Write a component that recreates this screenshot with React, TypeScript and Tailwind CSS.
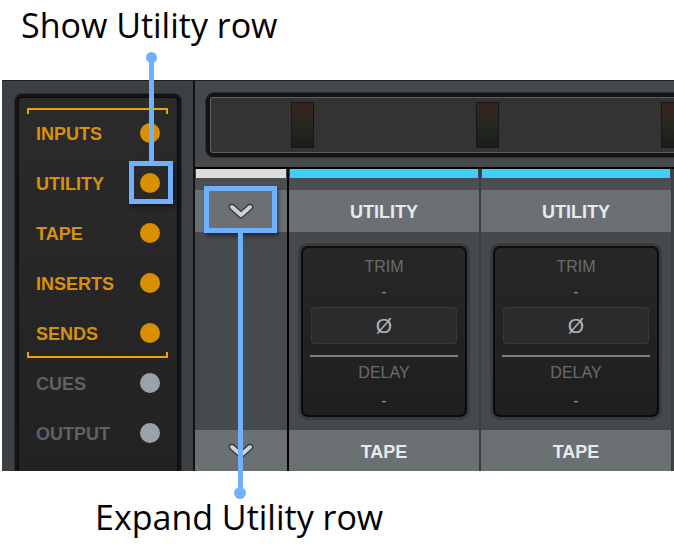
import React from 'react'

const uiFont = { fontFamily: '"Liberation Sans", Arial, sans-serif' }
const noteFont = { fontFamily: '"Open Sans", "Noto Sans", sans-serif' }

const sections = [
  { label: 'INPUTS', on: true },
  { label: 'UTILITY', on: true },
  { label: 'TAPE', on: true },
  { label: 'INSERTS', on: true },
  { label: 'SENDS', on: true },
]
const hidden = ['CUES', 'OUTPUT']

function Chevron() {
  return (
    <svg width="26" height="16" viewBox="0 0 26 16">
      <polyline points="4,4 13,12 22,4" fill="none" stroke="#33383b" strokeWidth="6.5" strokeLinecap="round" strokeLinejoin="round" />
      <polyline points="4,4 13,12 22,4" fill="none" stroke="#c9d3d9" strokeWidth="4" strokeLinecap="round" strokeLinejoin="round" />
    </svg>
  )
}

function Row({ label, on }: { label: string; on: boolean }) {
  return (
    <div className="h-[50px] flex items-center justify-between px-[17px]">
      <span className={`pt-[2px] text-[18px] font-bold ${on ? 'text-[#d8900a]' : 'text-[#5c6367]'}`}>{label}</span>
      <span className={`w-[20px] h-[20px] rounded-full ${on ? 'bg-[#d99000]' : 'bg-[#9ba2a7]'}`} />
    </div>
  )
}

function MeterBar() {
  return (
    <div className="w-[23px] h-[46px] border border-[#161616] bg-gradient-to-b from-[#3a241f] via-[#24281e] to-[#1b1f1a]" />
  )
}

function UtilityStrip() {
  return (
    <div className="w-[192px] flex flex-col border-r-2 border-[#3a3e41] bg-[#45494c]">
      <div className="h-[9px] mx-[1px] bg-[#40cdfa]" />
      <div className="h-[12px] bg-[#4a4e51]" />
      <div className="h-[42px] pt-[3px] bg-[#6b7072] flex items-center justify-center text-[18px] font-bold text-[#e8eaeb]">
        UTILITY
      </div>
      <div className="h-[198px] bg-[#45494c] px-[9px] pt-[11px]">
        <div className="h-[177px] rounded-[10px] bg-[#393c3f] p-[3px]">
          <div className="h-full rounded-[7px] border-2 border-[#0b0b0b] bg-gradient-to-b from-[#272727] to-[#1f1f1f] flex flex-col items-center">
            <div className="mt-[9px] leading-[20px] text-[16px] text-[#686c6f]">TRIM</div>
            <div className="mt-[5px] leading-[20px] text-[16px] text-[#8e9295]">-</div>
            <div className="mt-[5px] h-[37px] self-stretch mx-[8px] rounded-[4px] border border-[#3a3a3a] bg-[#2b2b2b] flex items-center justify-center text-[21px] text-[#aeb2b4]">
              Ø
            </div>
            <div className="mt-[11px] h-[2px] self-stretch mx-[7px] bg-[#7f7f7f]" />
            <div className="mt-[6px] leading-[20px] text-[16px] text-[#686c6f]">DELAY</div>
            <div className="mt-[8px] leading-[20px] text-[16px] text-[#8e9295]">-</div>
          </div>
        </div>
      </div>
      <div className="h-[41px] pt-[3px] bg-[#6b7072] flex items-center justify-center text-[18px] font-bold text-[#e8eaeb]">
        TAPE
      </div>
    </div>
  )
}

export default function App() {
  return (
    <div className="relative w-[674px] h-[546px] bg-white overflow-hidden">
      <div className="h-[80px] pl-[21px] pt-[8px] text-[34px] leading-none text-black" style={noteFont}>
        Show Utility row
      </div>

      <div className="ml-[2px] h-[391px] flex border-t border-[#1c1e20]" style={uiFont}>
        {/* section list */}
        <div className="w-[193px] flex flex-col bg-[#3c4043] pl-[12px] pt-[12px] border-r-2 border-[#111213]">
          <div className="w-[168px] flex-1 flex flex-col rounded-t-[8px] border border-[#2b2e31] border-b-0 bg-[#141414] p-[3px] pb-0">
            <div className="flex-1 rounded-t-[4px] border border-[#0a0a0a] border-b-0 bg-gradient-to-b from-[#2b2b2b] to-[#222222] pt-[10px]">
              <div className="relative">
                <div className="absolute left-[8px] right-[9px] top-0 h-[6px] border-t-2 border-x-2 border-[#f2a000]" />
                {sections.map(s => <Row key={s.label} label={s.label} on={s.on} />)}
                <div className="absolute left-[8px] right-[9px] bottom-0 h-[6px] border-b-2 border-x-2 border-[#f2a000]" />
              </div>
              {hidden.map(l => <Row key={l} label={l} on={false} />)}
            </div>
          </div>
        </div>

        {/* mixer */}
        <div className="flex-1 flex flex-col overflow-hidden">
          <div className="h-[88px] shrink-0 border-b-2 border-black bg-[#46494c] pl-[10px] pt-[11px]">
            <div className="w-[520px] h-[66px] rounded-l-[9px] border border-[#2c2f32] bg-[#141414] p-[4px] pr-0">
              <div className="h-full rounded-l-[3px] border border-r-0 border-[#5e5e5e] bg-[#333333] flex items-center pl-[80px] gap-[162px]">
                <MeterBar />
                <MeterBar />
                <MeterBar />
              </div>
            </div>
          </div>

          <div className="flex flex-1">
            <div className="w-[94px] flex flex-col border-r-2 border-black bg-[#45494c]">
              <div className="h-[9px] mx-[1px] bg-[#dcdcdc]" />
              <div className="h-[12px] bg-[#4a4e51]" />
              <div className="h-[42px] bg-[#6b7072] flex items-center justify-center">
                <Chevron />
              </div>
              <div className="h-[198px] bg-[#464a4d]" />
              <div className="h-[41px] bg-[#6b7072] flex items-center justify-center">
                <Chevron />
              </div>
            </div>
            <UtilityStrip />
            <UtilityStrip />
            <div className="flex-1 bg-[#45494c]" />
          </div>
        </div>
      </div>

      <div className="mt-[29px] pl-[95px] text-[34px] leading-none text-black" style={noteFont}>
        Expand Utility row
      </div>

      {/* callouts */}
      <div className="absolute left-[146px] top-[52px] w-[11px] h-[11px] rounded-full bg-[#6fb0ff]" />
      <div className="absolute left-[149px] top-[57px] w-[5px] h-[105px] bg-[#6fb0ff]" />
      <div className="absolute left-[129px] top-[161px] w-[44px] h-[43px] border-[5px] border-[#6fb0ff] shadow-[2px_3px_4px_rgba(0,0,0,0.45)]" />

      <div className="absolute left-[204px] top-[186px] w-[73px] h-[47px] border-[5px] border-[#6fb0ff] shadow-[2px_3px_4px_rgba(0,0,0,0.45)]" />
      <div className="absolute left-[238px] top-[232px] w-[5px] h-[261px] bg-[#6fb0ff]" />
      <div className="absolute left-[234px] top-[487px] w-[12px] h-[12px] rounded-full bg-[#6fb0ff]" />
    </div>
  )
}
